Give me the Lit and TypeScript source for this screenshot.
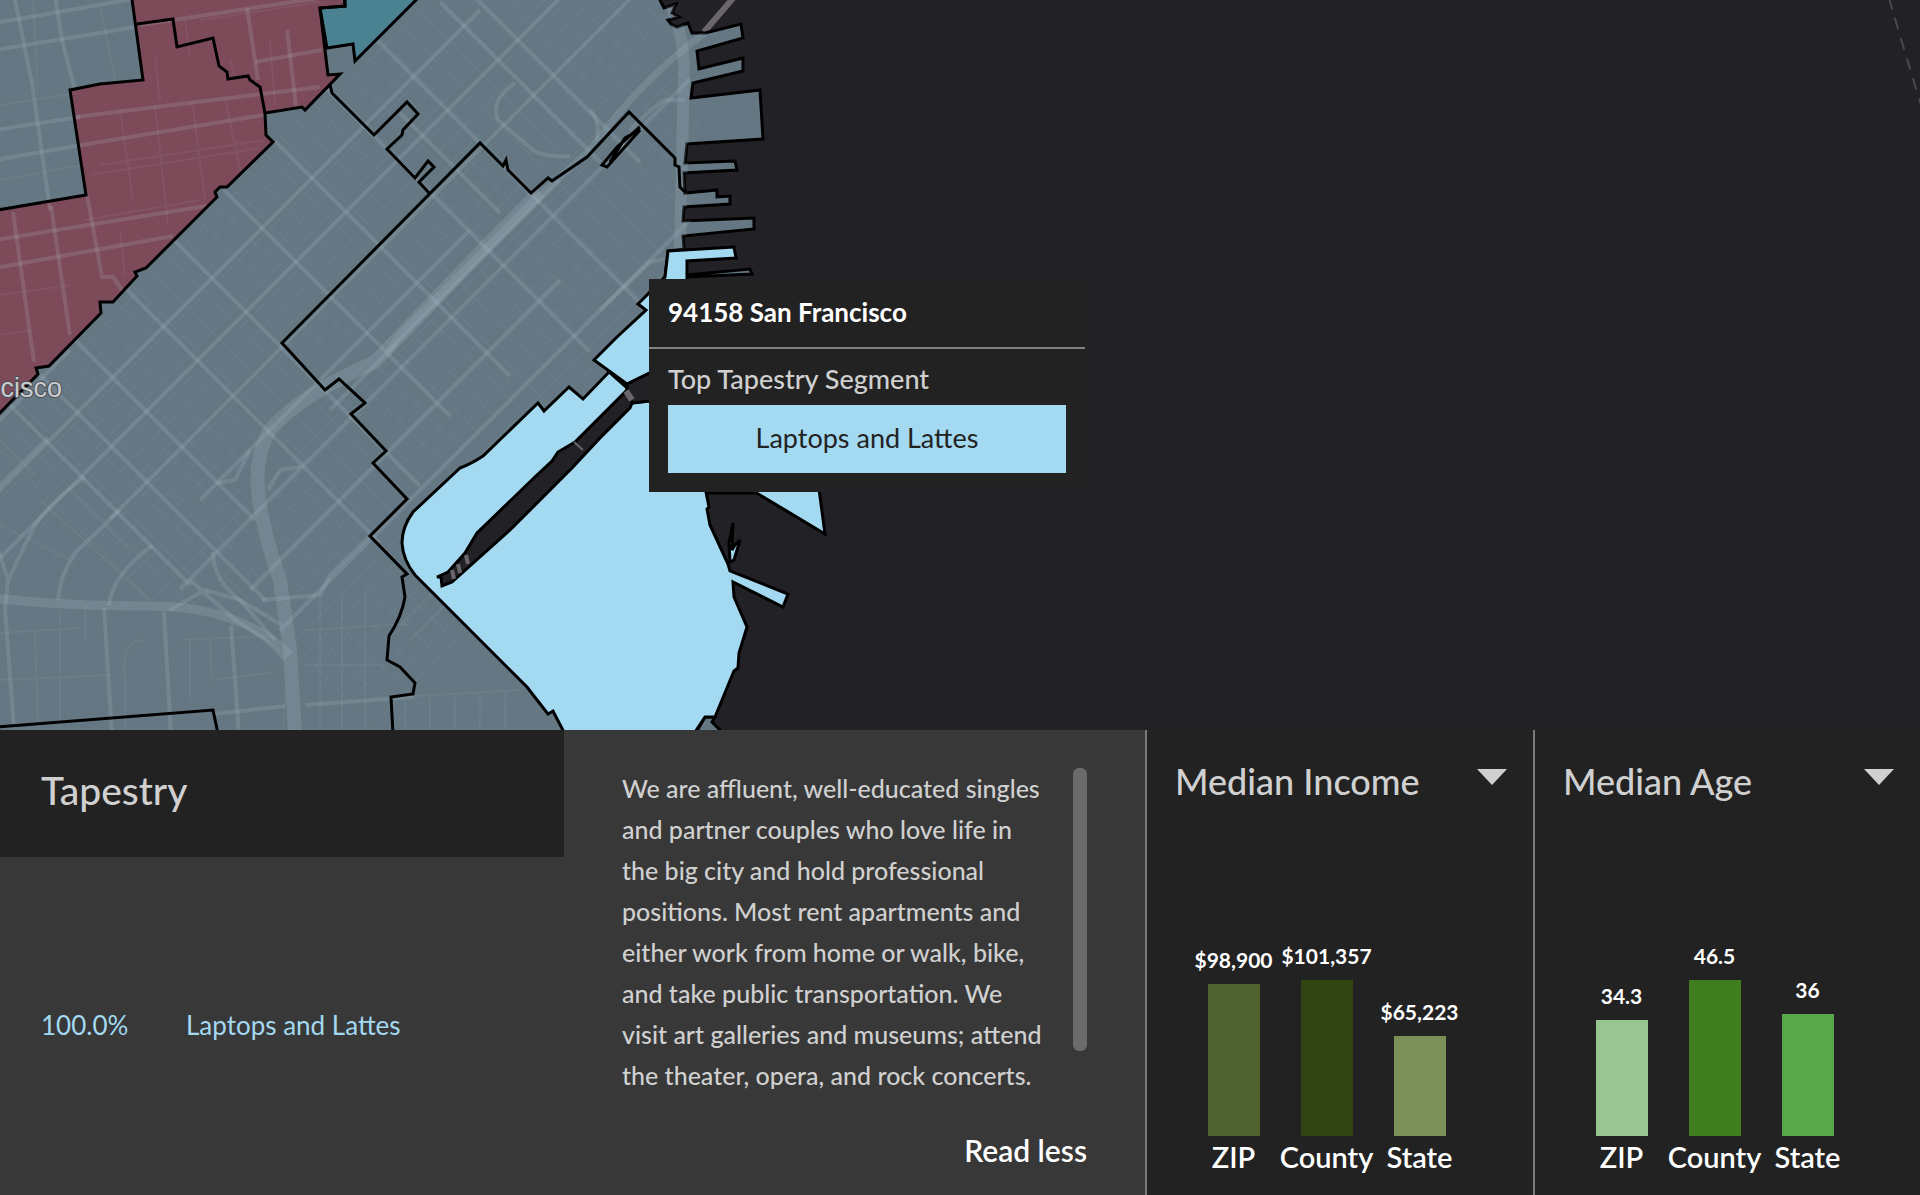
import { LitElement, html, svg, css } from "lit";
import { customElement, property } from "lit/decorators.js";

interface Bar {
  label: string;
  text: string;
  height: number;
  color: string;
}

/* Coast of the mainland, clockwise from the top-left corner. */
const LAND =
  "M-10-10H659L660 0 664 8 676 4 672 13 679 17 668 20 671 24 677 27 688 23 692 33 705 33 741 24 743 38 697 51 699 69 743 58 743 71 693 83 691 98 760 90 763 139 687 144 685 163 735 161 737 170 684 173 685 193 717 190 717 197 730 196 730 204 684 207 683 221 754 218 754 229 683 236 684 249 668 251 665 277 649 293 649 370 620 420 580 600 620 740H-10Z";

const RED =
  "M131-8 143 80 100 84 70 90 86 195-8 211V421L38 374 36 368 49 366 101 313 100 302 113 302 137 276 135 272 146 268 217 197 215 192 220 187 227 187 273 142 266 135 265 113 302 107 305 110 340 74 328 75 320 8 345 6 344-8Z";

const TEAL = "M345-8V6L320 8 327 48 353 44 355 61 424-8Z";

const HIGHLIGHT = [
  "M668 251 734 247 736 258 687 261 687 290 690 330 660 368 627 384 594 360 617 337 646 310 638 304 649 293 665 277Z",
  "M609 372 583 399 569 387 544 411 538 403 483 456Q471 464 460 468L413 512Q402 527 402 543 403 560 415 575L440 600 514 674 527 687 548 714 553 711 567 738H691L697 729 705 717H715L734 671 738 668 739 653 747 627 734 597 733 582 783 607 788 594 730 571 728 564 710 525 707 509 709 507 706 492 700 400 649 401 632 403 627 388Z",
  "M750 489 819 489 825 534Z",
  "M730 562 729 543 733 523 732 550 735 545 740 540 734 560Z",
];

const CANAL =
  "M627 390 575 442 558 452 552 461 537 475 477 533 465 553 448 572 437 577 441 577 442 586 452 582 510 530 573 467 600 438 630 408 632 403Z";

const BOUNDARIES = [
  "M137 24 173 19 177 47 213 38 219 66 227 72 228 79 248 76 250 80 260 87 265 113",
  "M330 85 332 93 374 135 407 102 418 114 403 130 402 135 387 149 415 178 428 161 434 167 419 182 430 194",
  "M685 192 680 187 679 167 675 165V158L629 112 587 157 552 181 548 178 531 193 508 170 506 160 503 166 480 143 282 343 325 390 339 379 365 403 351 414 386 451 373 463 407 499 370 536 407 574 402 577 405 597Q402 616 389 636L387 660 400 667 415 683 413 694 391 697 393 734",
  "M640 127 617 147 602 165 607 167 640 130 625 138 610 162",
  "M-4 727 213 710 218 734",
];

/* Diagonal street families: [x + y, from x, to x] and [x - y, from x, to x]. */
const RISING = [
  [490, -10, 480], [558, 0, 560], [629, 110, 640], [700, 200, 470], [740, 330, 560],
  [769, 180, 690], [840, 250, 560], [910, 280, 690], [420, -10, 70],
];
const FALLING = [
  [-395, -10, 190], [-335, -10, 265], [-265, 20, 255], [-163, 100, 380], [-66, 150, 420],
  [34, 205, 450], [134, 275, 510], [238, 325, 590], [287, 400, 500], [337, 360, 650],
  [438, 440, 600], [478, 470, 640],
];

const ROADS = [
  "M-5 23 133-1", "M-5 50 136 27", "M-5 130 80 117", "M-5 160 82 145", "M14-5 32 83 50 210",
  "M55-5 62 40 75 90", "M75 117 320 87", "M82 145 264 115", "M-5 240 206 206", "M-5 268 173 236",
  "M247 8 258 80", "M287 30 296 106", "M87 195 102 277H113L122 290", "M51 206 70 335", "M13 212 34 362",
  "M140 25 345-6", "M255 62 322 50", "M-5 490 48 438",
  "M85 477Q40 510 30 535L8 580M-5 540 8 580 5 610 14 728", "M153 545Q112 575 109 605M120 510 75 553Q60 575 58 600",
  "M104 608 112 735", "M164 612 171 735", "M231 625 239 735", "M215 714 285 706M305 705 414 697",
  "M370 536 330 575 320 595 262 600", "M213 552Q213 580 240 600L275 640", "M515 83Q490 100 498 120L533 150Q545 158 570 156",
  "M590 110Q600 120 597 140", "M685 100H665Q655 105 630 130", "M670 258 650 262 600 310",
];

const MINOR = [
  "M0 633 80 628M0 680 110 675M35 635 38 727M60 610V727M85 605V640M145 640Q120 640 125 680V727M180 640 270 636M210 640 212 680 275 672M305 630 410 624M305 665H385M320 595V730M342 595V730M365 590V730M190 640V700M285 690 284 730",
  "M0 525 70 560M40 500 150 600M70 490 130 550M0 440 35 475M410 640 450 600M400 625 440 585M400 697 520 690M405 700V730M430 697V730M455 695V730M480 693V730M505 692V730",
  "M100 5 115 80M33 0 38 90M0 105 78 93M0 180 83 165M0 335 30 330M0 295 70 285M90 175 260 148M185 20 190 55M230 60 235 75M120 110 133 200M155 105 168 225M192 100 205 200M225 98 240 170M155 55 160 100M85 220 200 200M100 165 265 140M120 230 125 275M200 20 320 2M270 40 275 105",
];

const FREEWAYS = [
  { d: "M665-10Q684 30 684 70L680 250", w: 12 },
  { d: "M705 33Q640 80 590 150L531 203 400 335 388 352", w: 7 },
  { d: "M540 192 490 242 375 362Q300 395 270 430 255 455 258 490 262 530 280 580L290 650 295 735", w: 14 },
  { d: "M-5 598Q60 606 150 606T290 655", w: 9 },
  { d: "M190 580 235 620Q270 640 285 660M170 610 205 590 240 600 282 625", w: 4 },
  { d: "M300 467 280 470 268 490M217 483 235 480 250 450", w: 4 },
];

@customElement("city-map")
export class CityMap extends LitElement {
  static styles = css`
    :host { display: block; width: 100%; height: 100%; background: #222126; }
    svg { display: block; width: 100%; height: 100%; }
    .land { fill: #657782; stroke: #000; stroke-width: 3; }
    .red { fill: #7d4a5a; }
    .teal { fill: #4a8291; }
    .road { fill: none; stroke: #b4c8d4; stroke-opacity: 0.18; stroke-linejoin: round; }
    .fine { fill: none; stroke: #b4c8d4; stroke-opacity: 0.08; }
    .line { fill: none; stroke: #000; stroke-width: 3; stroke-linejoin: miter; }
    .hot { fill: #a3d9f1; stroke: #000; stroke-width: 3; }
    .canal { fill: #222126; stroke: #000; stroke-width: 3; }
    .bridge { stroke: #6b666b; fill: none; }
    .limit { stroke: #4a494e; fill: none; }
    .place {
      font: 27px "Liberation Sans", Arial, sans-serif;
      fill: #c9cdd0;
      text-anchor: end;
      paint-order: stroke;
      stroke: #4a4f54;
      stroke-width: 2;
    }
  `;

  render() {
    const fine: string[] = [];
    for (let c = 430; c < 1120; c += 23) fine.push(`M-10 ${c + 10}L${c + 10}-10`);
    for (let c = -450; c < 640; c += 33) fine.push(`M${c - 10}-10L740 ${740 - c}`);
    return html`
      <svg viewBox="0 0 1920 730" preserveAspectRatio="xMinYMin slice" role="img">
        <defs>
          <clipPath id="land"><path d=${LAND}></path></clipPath>
          <clipPath id="diag"><path d="M424-10 0 413V595Q60 606 150 606T290 655L400 740H700V-10Z"></path></clipPath>
        </defs>
        <path class="bridge" stroke-width="6" d="M704 32 735-4"></path>
        <path class="limit" stroke-width="2" stroke-dasharray="12 9" d="M1889-2Q1904 50 1922 108"></path>
        <path class="land" d=${LAND}></path>
        <path class="land" d="M687 275 750 269 752 274 687 277Z"></path>
        <path class="red" d=${RED}></path>
        <path class="teal" d=${TEAL}></path>
        <g clip-path="url(#land)">
          <g clip-path="url(#diag)">
            <path class="fine" d=${fine.join("")}></path>
            ${RISING.map(([c, a, b]) => svg`<path class="road" stroke-width="4" d="M${a} ${c - a}L${b} ${c - b}"></path>`)}
            ${FALLING.map(([c, a, b]) => svg`<path class="road" stroke-width="4" d="M${a} ${a - c}L${b} ${b - c}"></path>`)}
          </g>
          ${MINOR.map((d) => svg`<path class="fine" stroke-width="2" d=${d}></path>`)}
          ${ROADS.map((d) => svg`<path class="road" stroke-width="4" d=${d}></path>`)}
          ${FREEWAYS.map((f) => svg`<path class="road" stroke-width=${f.w} d=${f.d}></path>`)}
        </g>
        <path class="line" d=${RED}></path>
        <path class="line" d=${TEAL}></path>
        ${BOUNDARIES.map((d) => svg`<path class="line" d=${d}></path>`)}
        <path class="land" d="M693 738 705 717 715 717 712 722 720 730 722 740Z"></path>
        ${HIGHLIGHT.map((d) => svg`<path class="hot" d=${d}></path>`)}
        <path class="canal" d="M627 384 660 368V400L632 403 627 390Z"></path>
        <path class="canal" d=${CANAL}></path>
        <path class="line" d="M706 493H757"></path>
        <path class="bridge" stroke-width="2" d="M574 442 583 450"></path>
        <path class="bridge" stroke-width="6" d="M626 391 632 400"></path>
        <path class="bridge" stroke-width="4" d="M452 570 454 579M458 564 460 573M466 555 468 564"></path>
        <text class="place" x="62" y="397">cisco</text>
      </svg>
    `;
  }
}

@customElement("stat-chart")
export class StatChart extends LitElement {
  @property() heading = "";
  @property({ attribute: false }) bars: Bar[] = [];

  static styles = css`
    :host {
      display: flex;
      flex-direction: column;
      justify-content: space-between;
      box-sizing: border-box;
      background: #222;
      border-left: 2px solid #7a7a7a;
      padding: 27px 26px 20px 28px;
    }
    .picker { display: flex; align-items: center; position: relative; }
    .picker select {
      appearance: none;
      flex: 1;
      min-width: 0;
      border: 0;
      padding: 0;
      background: none;
      color: #d0d0d0;
      font: 500 36px/48px Lato, sans-serif;
    }
    .arrow {
      position: absolute;
      right: 0;
      top: 12px;
      width: 30px;
      height: 16px;
      background: #d0d0d0;
      clip-path: polygon(0 0, 100% 0, 50% 100%);
      pointer-events: none;
    }
    .bars { display: flex; align-items: flex-end; padding-left: 12px; }
    .col { width: 93px; display: flex; flex-direction: column; align-items: center; white-space: nowrap; }
    .value { font: 700 21px/28px Lato, sans-serif; color: #fff; margin-bottom: 10px; }
    .bar { width: 52px; }
    .name { font: 600 29px/36px Lato, sans-serif; color: #fff; margin-top: 3px; }
  `;

  render() {
    return html`
      <div class="picker">
        <select aria-label=${this.heading}><option>${this.heading}</option></select>
        <span class="arrow"></span>
      </div>
      <div class="bars">
        ${this.bars.map(
          (b) => html`<div class="col">
            <span class="value">${b.text}</span>
            <span class="bar" style="height:${b.height}px;background:${b.color}"></span>
            <span class="name">${b.label}</span>
          </div>`,
        )}
      </div>
    `;
  }
}

@customElement("app-root")
export class AppRoot extends LitElement {
  static styles = css`
    :host {
      display: flex;
      flex-direction: column;
      min-height: 100vh;
      background: #222;
      font-family: Lato, sans-serif;
      color: #d0d0d0;
    }
    h2, h3, p { margin: 0; }
    .map { position: relative; flex: 1; min-height: 500px; overflow: hidden; }
    city-map { position: absolute; inset: 0; }
    .popup {
      position: absolute;
      left: 649px;
      top: 279px;
      width: 436px;
      background: #222;
    }
    .popup h3 {
      font-size: 26px;
      line-height: 36px;
      font-weight: 700;
      color: #fff;
      padding: 15px 19px 17px;
      border-bottom: 2px solid #808080;
    }
    .segment { padding: 12px 19px 19px; font-size: 27px; line-height: 36px; font-weight: 500; }
    .tag {
      margin-top: 8px;
      padding: 15px 16px 17px;
      text-align: center;
      background: #a3d9f1;
      color: #222;
      font-weight: 400;
    }
    .dock { display: grid; grid-template-columns: 564fr 581fr 388fr 387fr; min-height: 465px; background: #383838; }
    .tapestry { display: flex; flex-direction: column; }
    .tapestry h2 {
      background: #222;
      padding: 36px 41px 43px;
      font-size: 39px;
      line-height: 48px;
      font-weight: 500;
    }
    .shares { flex: 1; display: grid; align-items: center; grid-template-columns: 145px 1fr; padding: 0 41px 2px; color: #a3d9f1; font-size: 26px; }
    .story { display: flex; flex-direction: column; align-items: flex-end; justify-content: space-between; padding: 38px 58px 27px; }
    .scroller { display: flex; justify-content: space-between; align-items: flex-start; align-self: stretch; gap: 10px; }
    .story p { font-size: 25px; line-height: 41px; font-weight: 500; flex: 1; }
    .thumb { width: 14px; height: 283px; border-radius: 6px; background: #6b6b6b; }
    .toggle { border: 0; padding: 0; background: none; color: #fff; font: 600 30px/36px Lato, sans-serif; }
  `;

  private income: Bar[] = [
    { label: "ZIP", text: "$98,900", height: 152, color: "#4e612e" },
    { label: "County", text: "$101,357", height: 156, color: "#314513" },
    { label: "State", text: "$65,223", height: 100, color: "#7b8f58" },
  ];

  private age: Bar[] = [
    { label: "ZIP", text: "34.3", height: 116, color: "#99c593" },
    { label: "County", text: "46.5", height: 156, color: "#3f7d1f" },
    { label: "State", text: "36", height: 122, color: "#58a748" },
  ];

  render() {
    return html`
      <div class="map">
        <city-map></city-map>
        <div class="popup">
          <h3>94158 San Francisco</h3>
          <div class="segment">
            <p>Top Tapestry Segment</p>
            <div class="tag">Laptops and Lattes</div>
          </div>
        </div>
      </div>
      <div class="dock">
        <section class="tapestry">
          <h2>Tapestry</h2>
          <div class="shares"><span>100.0%</span><span>Laptops and Lattes</span></div>
        </section>
        <section class="story">
          <div class="scroller">
            <p>
              We are affluent, well-educated singles<br />
              and partner couples who love life in<br />
              the big city and hold professional<br />
              positions. Most rent apartments and<br />
              either work from home or walk, bike,<br />
              and take public transportation. We<br />
              visit art galleries and museums; attend<br />
              the theater, opera, and rock concerts.
            </p>
            <div class="thumb"></div>
          </div>
          <button class="toggle">Read less</button>
        </section>
        <stat-chart heading="Median Income" .bars=${this.income}></stat-chart>
        <stat-chart heading="Median Age" .bars=${this.age}></stat-chart>
      </div>
    `;
  }
}
